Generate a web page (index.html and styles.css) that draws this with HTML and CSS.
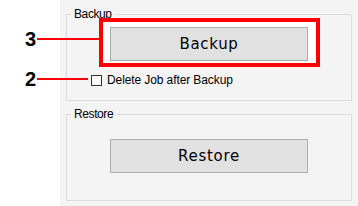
FILE: index.html
```html
<!DOCTYPE html>
<html>
<head>
<meta charset="utf-8">
<link rel="stylesheet" href="styles.css">
</head>
<body>
<div class="gutter"></div>
<div class="panel">
  <fieldset class="group group-backup">
    <legend>Backup</legend>
    <div class="btn-wrap highlighted">
      <button class="btn" type="button">Backup</button>
    </div>
    <label class="check-row">
      <span class="checkbox"></span>
      <span class="check-text">Delete Job after Backup</span>
    </label>
  </fieldset>
  <fieldset class="group group-restore">
    <legend>Restore</legend>
    <div class="btn-wrap">
      <button class="btn" type="button">Restore</button>
    </div>
  </fieldset>
</div>
<div class="callout callout-3"><span class="num">3</span><span class="leader"></span></div>
<div class="callout callout-2"><span class="num">2</span><span class="leader"></span></div>
</body>
</html>
```
FILE: styles.css
```css
html, body {
  margin: 0;
  padding: 0;
  width: 358px;
  height: 206px;
  overflow: hidden;
  background: #ffffff;
}
body {
  position: relative;
  display: flex;
  font-family: "Liberation Sans", Arial, sans-serif;
  color: #000;
}
.gutter {
  width: 60px;
  flex: none;
}
.panel {
  flex: 1;
  background: #f4f4f4;
  padding: 7px 6px 0 6px;
  display: flex;
  flex-direction: column;
  gap: 6px;
}
.group {
  margin: 0;
  border: 1px solid #dcdcdc;
  padding: 0;
  min-width: 0;
}
.group legend {
  margin-left: 4px;
  padding: 0 3px;
  font-size: 12px;
  line-height: 14px;
  letter-spacing: -0.4px;
}
.group-backup {
  padding: 6px 0 13px;
}
.group-restore {
  padding: 18px 0 27px;
}
.btn-wrap {
  display: flex;
  justify-content: center;
}
.btn {
  width: 198px;
  height: 34px;
  margin: 0;
  padding: 0;
  background: #e1e1e1;
  border: 1px solid #adadad;
  border-radius: 0;
  font-family: "DejaVu Sans", sans-serif;
  font-weight: normal;
  font-size: 15px;
  letter-spacing: 0.7px;
  color: #000;
  position: relative;
  z-index: 1;
}
.highlighted {
  position: relative;
}
.highlighted::before {
  content: "";
  position: absolute;
  top: -9px;
  bottom: -6px;
  left: 32px;
  right: 31px;
  background: #ffffff;
  border: 4px solid #ff0000;
}
.check-row {
  display: flex;
  align-items: center;
  margin-top: 12px;
  margin-left: 24px;
  height: 14px;
}
.checkbox {
  width: 9px;
  height: 9px;
  border: 1px solid #333333;
  background: #ffffff;
  flex: none;
}
.check-text {
  margin-left: 5px;
  font-size: 12px;
  line-height: 14px;
  letter-spacing: -0.1px;
}
.callout {
  position: absolute;
  left: 25px;
  display: flex;
  align-items: center;
}
.callout .num {
  font-family: "Liberation Sans", Arial, sans-serif;
  font-weight: bold;
  font-size: 20px;
  line-height: 20px;
  width: 12px;
}
.callout .leader {
  height: 2px;
  background: #ff0000;
}
.callout-3 {
  top: 29px;
}
.callout-3 .leader {
  width: 63px;
}
.callout-2 {
  top: 69px;
}
.callout-2 .leader {
  width: 51px;
}
```
